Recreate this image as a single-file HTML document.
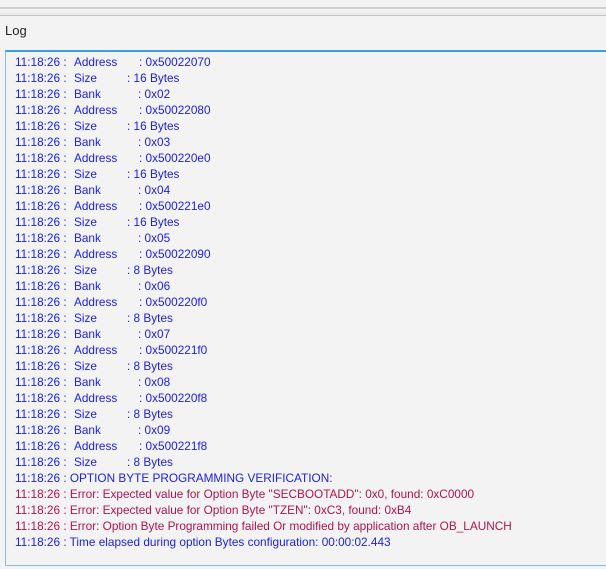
<!DOCTYPE html>
<html><head><style>
body{margin:0;width:606px;height:569px;background:#f3f3f3;position:relative;overflow:hidden;font-family:"Liberation Sans",sans-serif}
.l1{position:absolute;left:0;top:7px;width:606px;height:2px;background:#cfcfcf}
.band{position:absolute;left:0;top:9px;width:606px;height:6px;background:linear-gradient(#f6f6f6,#e8e8e8)}
.l2{position:absolute;left:0;top:15px;width:606px;height:1px;background:#c4c4c4}
.log{position:absolute;left:5px;top:23px;font-size:13px;color:#222}
.box{position:absolute;left:5px;top:50px;width:610px;height:513px;border:1px solid #8fb8d8;border-top:2px solid #3a9ee0;border-right:none;background:#f3f3f3;overflow:hidden}
.t{position:absolute;left:9px;top:2px;font-size:11.8px;line-height:16px;color:#2020e8;white-space:nowrap}
.r{color:#b01550}
span{position:absolute;top:0}
.row{position:relative;height:16px}
</style></head><body>
<div class="l1"></div><div class="band"></div><div class="l2"></div>
<div class="log">Log</div>
<div class="box"><div class="t"><div class="row">11:18:26 :<span style="left:59px">Address</span><span style="left:124px">: 0x50022070</span></div><div class="row">11:18:26 :<span style="left:59px">Size</span><span style="left:112px">: 16 Bytes</span></div><div class="row">11:18:26 :<span style="left:59px">Bank</span><span style="left:123px">: 0x02</span></div><div class="row">11:18:26 :<span style="left:59px">Address</span><span style="left:124px">: 0x50022080</span></div><div class="row">11:18:26 :<span style="left:59px">Size</span><span style="left:112px">: 16 Bytes</span></div><div class="row">11:18:26 :<span style="left:59px">Bank</span><span style="left:123px">: 0x03</span></div><div class="row">11:18:26 :<span style="left:59px">Address</span><span style="left:124px">: 0x500220e0</span></div><div class="row">11:18:26 :<span style="left:59px">Size</span><span style="left:112px">: 16 Bytes</span></div><div class="row">11:18:26 :<span style="left:59px">Bank</span><span style="left:123px">: 0x04</span></div><div class="row">11:18:26 :<span style="left:59px">Address</span><span style="left:124px">: 0x500221e0</span></div><div class="row">11:18:26 :<span style="left:59px">Size</span><span style="left:112px">: 16 Bytes</span></div><div class="row">11:18:26 :<span style="left:59px">Bank</span><span style="left:123px">: 0x05</span></div><div class="row">11:18:26 :<span style="left:59px">Address</span><span style="left:124px">: 0x50022090</span></div><div class="row">11:18:26 :<span style="left:59px">Size</span><span style="left:112px">: 8 Bytes</span></div><div class="row">11:18:26 :<span style="left:59px">Bank</span><span style="left:123px">: 0x06</span></div><div class="row">11:18:26 :<span style="left:59px">Address</span><span style="left:124px">: 0x500220f0</span></div><div class="row">11:18:26 :<span style="left:59px">Size</span><span style="left:112px">: 8 Bytes</span></div><div class="row">11:18:26 :<span style="left:59px">Bank</span><span style="left:123px">: 0x07</span></div><div class="row">11:18:26 :<span style="left:59px">Address</span><span style="left:124px">: 0x500221f0</span></div><div class="row">11:18:26 :<span style="left:59px">Size</span><span style="left:112px">: 8 Bytes</span></div><div class="row">11:18:26 :<span style="left:59px">Bank</span><span style="left:123px">: 0x08</span></div><div class="row">11:18:26 :<span style="left:59px">Address</span><span style="left:124px">: 0x500220f8</span></div><div class="row">11:18:26 :<span style="left:59px">Size</span><span style="left:112px">: 8 Bytes</span></div><div class="row">11:18:26 :<span style="left:59px">Bank</span><span style="left:123px">: 0x09</span></div><div class="row">11:18:26 :<span style="left:59px">Address</span><span style="left:124px">: 0x500221f8</span></div><div class="row">11:18:26 :<span style="left:59px">Size</span><span style="left:112px">: 8 Bytes</span></div><div class="row">11:18:26 : OPTION BYTE PROGRAMMING VERIFICATION:</div><div class="row r">11:18:26 : Error: Expected value for Option Byte "SECBOOTADD": 0x0, found: 0xC0000</div><div class="row r">11:18:26 : Error: Expected value for Option Byte "TZEN": 0xC3, found: 0xB4</div><div class="row r">11:18:26 : Error: Option Byte Programming failed Or modified by application after OB_LAUNCH</div><div class="row">11:18:26 : Time elapsed during option Bytes configuration: 00:00:02.443</div></div></div>
</body></html>
